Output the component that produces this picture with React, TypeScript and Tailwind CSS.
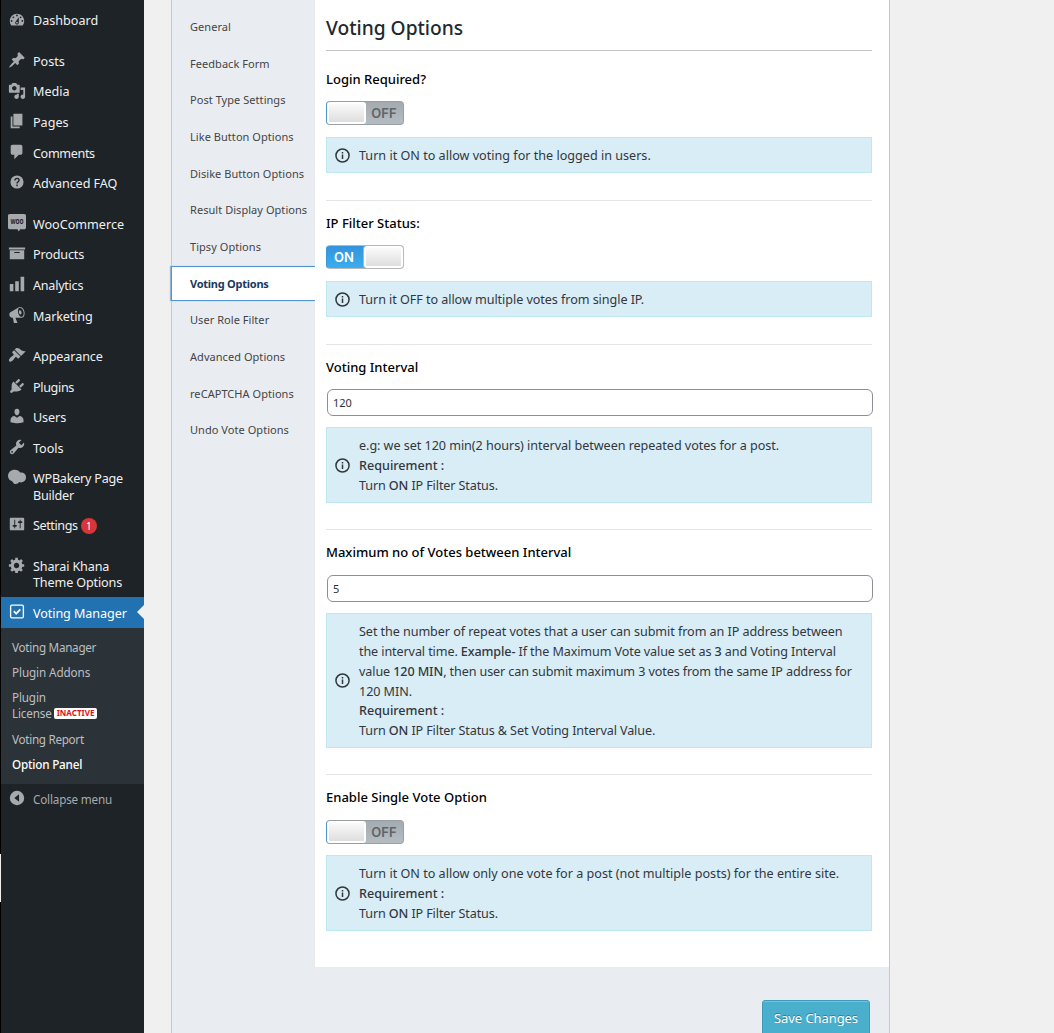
import type { ReactNode } from "react";
import { clsx } from "clsx";

// ---- Icons (20x20 grid) ----

const ICONS: Record<string, ReactNode> = {
  dashboard: (
    <path d="M3.76 16h12.48c1.1-1.37 1.76-3.11 1.76-5 0-4.42-3.58-8-8-8s-8 3.58-8 8c0 1.89.66 3.63 1.76 5zM10 4c.55 0 1 .45 1 1s-.45 1-1 1-1-.45-1-1 .45-1 1-1zM6 6c.55 0 1 .45 1 1s-.45 1-1 1-1-.45-1-1 .45-1 1-1zm8 0c.55 0 1 .45 1 1s-.45 1-1 1-1-.45-1-1 .45-1 1-1zm-5.37 5.55L12 7v6c0 1.1-.9 2-2 2s-2-.9-2-2c0-.57.24-1.08.63-1.45zM4 10c.55 0 1 .45 1 1s-.45 1-1 1-1-.45-1-1 .45-1 1-1zm12 0c.55 0 1 .45 1 1s-.45 1-1 1-1-.45-1-1 .45-1 1-1zm-5 3c0-.55-.45-1-1-1s-1 .45-1 1 .45 1 1 1 1-.45 1-1z" />
  ),
  posts: (
    <path d="M10.44 3.02l1.82-1.82 6.36 6.35-1.83 1.82c-1.05-.68-2.48-.57-3.41.36l-.75.75c-.92.93-1.04 2.35-.35 3.41l-1.83 1.82-2.41-2.41-2.8 2.79c-.42.42-3.38 2.71-3.8 2.29s1.86-3.39 2.28-3.81l2.79-2.79L4.1 9.36l1.83-1.82c1.05.69 2.48.57 3.4-.36l.75-.75c.93-.92 1.05-2.35.36-3.41z" />
  ),
  media: (
    <path d="M13 11V4c0-.55-.45-1-1-1h-1.67L9 1H5L3.67 3H2c-.55 0-1 .45-1 1v7c0 .55.45 1 1 1h10c.55 0 1-.45 1-1zM7 4.5c1.38 0 2.5 1.12 2.5 2.5S8.38 9.5 7 9.5 4.5 8.38 4.5 7 5.62 4.5 7 4.5zM14 6h5v10.5c0 1.38-1.12 2.5-2.5 2.5S14 17.88 14 16.5s1.12-2.5 2.5-2.5c.17 0 .34.02.5.05V9h-3V6zm-4 8.05V13h2v3.5c0 1.38-1.12 2.5-2.5 2.5S7 17.88 7 16.5 8.12 14 9.5 14c.17 0 .34.02.5.05z" />
  ),
  pages: <path d="M6 15V2h10v13H6zm-1 1h8v2H3V5h2v11z" />,
  comments: (
    <path d="M5 2h9c1.1 0 2 .9 2 2v7c0 1.1-.9 2-2 2h-2l-5 5v-5H5c-1.1 0-2-.9-2-2V4c0-1.1.9-2 2-2z" />
  ),
  help: (
    <>
      <circle cx="10" cy="10" r="7.3" />
      <path d="M7.7 8.2c0-1.4 1-2.2 2.3-2.2s2.3.8 2.3 2c0 1.7-2.3 1.8-2.3 3.7M10 12.9v1.7" fill="none" stroke="#1d2327" strokeWidth="1.5" />
    </>
  ),
  woo: (
    <>
      <path d="M2 0h16c1.2 0 2 .8 2 2v13c0 1.2-.8 2-2 2h-4.500L12 19.500 10.500 17H2c-1.2 0-2-.8-2-2V2C0 .8.8 0 2 0z" />
      <text x="10" y="11.500" textAnchor="middle" fontSize="8" fontWeight="800" fill="#1d2327" textLength="14.500" lengthAdjust="spacingAndGlyphs">
        WOO
      </text>
    </>
  ),
  products: <path d="M19 4v2H1V4h18zM2 7h16v10H2V7zm11 3V9H7v1h6z" />,
  analytics: <path d="M18 18V2h-4v16h4zm-6 0V7H8v11h4zm-6 0v-8H2v8h4z" />,
  marketing: (
    <path d="M18.15 5.94c.46 1.62.38 3.22-.02 4.48-.42 1.28-1.26 2.18-2.3 2.48-.16.06-.26.06-.4.06-.06.02-.12.02-.18.02-.06.02-.14.02-.22.02h-6.8l2.22 5.5c.02.14-.06.26-.14.34-.08.1-.24.16-.34.16H6.95c-.1 0-.26-.06-.34-.16-.08-.08-.16-.2-.14-.34l-1-5.5H4.25l-.02-.02c-.5.06-1.08-.18-1.54-.62s-.88-1.08-1.06-1.88c-.24-.8-.2-1.56-.02-2.2.18-.62.58-1.08 1.06-1.3l.02-.02 9-5.4c.1-.06.18-.1.24-.16.06-.04.14-.08.24-.12.16-.08.28-.12.5-.18 1.04-.3 2.24.1 3.22.98s1.84 2.24 2.26 3.86zm-2.58 5.98h-.02c.4-.1.74-.34 1.04-.7.58-.7.86-1.76.86-3.04 0-.64-.1-1.3-.28-1.98-.34-1.36-1.02-2.5-1.78-3.24s-1.68-1.1-2.46-.88c-.82.22-1.4.96-1.7 2-.32 1.04-.28 2.36.06 3.72.38 1.36 1 2.5 1.8 3.24.78.74 1.62 1.1 2.48.88zm-2.54-7.08c.22-.04.42-.02.62.04.38.16.76.48 1.02 1s.42 1.2.42 1.78c0 .3-.04.56-.12.8-.18.48-.44.84-.86.94-.34.1-.8-.06-1.14-.4s-.64-.86-.78-1.5c-.18-.62-.12-1.24.02-1.72s.48-.84.82-.94z" />
  ),
  appearance: (
    <path d="M14.48 11.06L7.41 3.99l1.5-1.5c.5-.56 2.3-.47 3.51.32 1.21.8 1.43 1.28 2.91 2.1 1.18.64 2.45 1.26 4.45.85zm-.71.71L6.7 4.7 4.93 6.47c-.39.39-.39 1.02 0 1.41l1.06 1.06c.39.39.39 1.03 0 1.42-.6.6-1.43 1.11-2.21 1.69-.35.26-.7.53-1.01.84C1.43 14.23.4 16.08 1.4 17.07c.99 1 2.84-.03 4.18-1.36.31-.31.58-.66.85-1.02.57-.78 1.08-1.61 1.69-2.21.39-.39 1.02-.39 1.41 0l1.06 1.06c.39.39 1.02.39 1.41 0z" />
  ),
  plugins: (
    <path d="M13.11 4.36L9.87 7.6 8 5.73l3.24-3.24c.35-.34 1.05-.2 1.56.32.52.51.66 1.21.31 1.55zm-8 1.77l.91-1.12 9.01 9.01-1.19.84c-.71.71-2.63 1.16-3.82 1.16H6.14L4.9 17.26c-.59.59-1.54.59-2.12 0-.59-.58-.59-1.53 0-2.12l1.24-1.24v-3.88c0-1.13.4-3.19 1.09-3.89zm7.26 3.97l3.24-3.24c.34-.35 1.04-.21 1.55.31.52.51.66 1.21.31 1.55l-3.24 3.25z" />
  ),
  users: (
    <path d="M10 9.25c-2.27 0-2.73-3.44-2.73-3.44C7 4.02 7.82 2 9.97 2c2.16 0 2.98 2.02 2.71 3.81 0 0-.41 3.44-2.68 3.44zm0 2.57L12.72 10c2.39 0 4.52 2.33 4.52 4.53v2.49s-3.65 1.13-7.24 1.13c-3.65 0-7.24-1.13-7.24-1.13v-2.49c0-2.25 1.94-4.48 4.47-4.48z" />
  ),
  tools: (
    <path d="M16.68 9.77c-1.34 1.34-3.3 1.67-4.95.99l-5.41 6.52c-.99.99-2.59.99-3.58 0s-.99-2.59 0-3.57l6.52-5.42c-.68-1.65-.35-3.61.99-4.95 1.28-1.28 3.12-1.62 4.72-1.06l-2.89 2.89 2.82 2.82 2.86-2.87c.53 1.58.18 3.39-1.08 4.65zM3.81 16.21c.4.39 1.04.39 1.43 0 .4-.4.4-1.04 0-1.43-.39-.4-1.03-.4-1.43 0-.39.39-.39 1.03 0 1.43z" />
  ),
  bakery: (
    <path d="M7.500 2c3 0 5 1.300 6 3 3.500-.5 6.500 1.800 6.500 5.300s-2.600 5.700-5.500 5.700c-.8 0-1.500-.1-2-.4-1.300 2-4 2.700-6 1.500-.8-.5-1.300-1.200-1.500-2.100C2 14 0 12 0 9c0-4 3.200-7 7.500-7z" />
  ),
  settings: (
    <path d="M18 16V4c0-.55-.45-1-1-1H3c-.55 0-1 .45-1 1v12c0 .55.45 1 1 1h14c.55 0 1-.45 1-1zM8 11h1c.55 0 1 .45 1 1s-.45 1-1 1H8v1.5c0 .28-.22.5-.5.5s-.5-.22-.5-.5V13H6c-.55 0-1-.45-1-1s.45-1 1-1h1V5.5c0-.28.22-.5.5-.5s.5.22.5.5V11zm5-2h-1c-.55 0-1-.45-1-1s.45-1 1-1h1V5.5c0-.28.22-.5.5-.5s.5.22.5.5V7h1c.55 0 1 .45 1 1s-.45 1-1 1h-1v5.5c0 .28-.22.5-.5.5s-.5-.22-.5-.5V9z" />
  ),
  gear: (
    <path d="M18 12h-2.18c-.17.7-.44 1.35-.81 1.93l1.54 1.54-2.1 2.1-1.54-1.54c-.58.36-1.23.63-1.91.79V19H8v-2.18c-.68-.16-1.33-.43-1.91-.79l-1.54 1.54-2.12-2.12 1.54-1.54c-.36-.58-.63-1.23-.79-1.91H1V9.03h2.17c.16-.7.44-1.35.8-1.94L2.43 5.55l2.1-2.1 1.54 1.54c.58-.37 1.24-.64 1.93-.81V2h3v2.18c.68.16 1.33.43 1.91.79l1.54-1.54 2.12 2.12-1.54 1.54c.36.59.64 1.24.8 1.94H18V12zm-8.5 1.5c1.66 0 3-1.34 3-3s-1.34-3-3-3-3 1.34-3 3 1.34 3 3 3z" />
  ),
  voting: (
    <g fill="none" stroke="currentColor" strokeWidth="1.5">
      <rect x="2.9" y="2.4" width="14.2" height="14.2" rx="1.5" />
      <path d="M6.5 9l2.6 2.9L13.7 7" strokeWidth="1.9" />
    </g>
  ),
  collapse: (
    <>
      <circle cx="10" cy="10" r="8" />
      <path d="M12.3 5.8v8.4L7 10z" fill="#1d2327" />
    </>
  ),
};

function Icon({ name }: { name: string }) {
  return (
    <div className="flex w-8 shrink-0 pl-[7px]">
      <svg viewBox="0 0 20 20" fill="currentColor" className="mt-[5.5px] h-[18px] w-[18px] shrink-0 overflow-visible">
        {ICONS[name]}
      </svg>
    </div>
  );
}

// ---- Admin menu ----

interface MenuItem {
  icon: string;
  label: ReactNode;
  tracking?: string;
}

const MENU: MenuItem[][] = [
  [{ icon: "dashboard", label: "Dashboard" }],
  [
    { icon: "posts", label: "Posts" },
    { icon: "media", label: "Media" },
    { icon: "pages", label: "Pages" },
    { icon: "comments", label: "Comments", tracking: "tracking-[-0.35px]" },
    { icon: "help", label: "Advanced FAQ", tracking: "tracking-[-0.08px]" },
  ],
  [
    { icon: "woo", label: "WooCommerce" },
    { icon: "products", label: "Products", tracking: "tracking-[-0.15px]" },
    { icon: "analytics", label: "Analytics", tracking: "tracking-[-0.25px]" },
    { icon: "marketing", label: "Marketing", tracking: "tracking-[-0.15px]" },
  ],
  [
    { icon: "appearance", label: "Appearance", tracking: "tracking-[-0.08px]" },
    { icon: "plugins", label: "Plugins", tracking: "tracking-[-0.35px]" },
    { icon: "users", label: "Users", tracking: "tracking-[-0.1px]" },
    { icon: "tools", label: "Tools" },
    { icon: "bakery", label: <>WPBakery Page<br />Builder</>, tracking: "tracking-[-0.22px]" },
    {
      icon: "settings",
      label: (
        <span className="flex items-center">
          Settings
          <span className="-my-1 ml-[3px] flex h-4 w-4 items-center justify-center rounded-full bg-[#d63638] text-[10px] text-white">
            1
          </span>
        </span>
      ),
      tracking: "tracking-[-0.4px]",
    },
  ],
  [{ icon: "gear", label: <>Sharai Khana<br />Theme Options</>, tracking: "tracking-[-0.13px]" }],
];

function AdminMenu() {
  return (
    <nav className="flex w-36 shrink-0 flex-col border-l border-black bg-[#1d2327] pt-[5px] text-[12.6px] leading-[16.2px] text-[#f0f0f1]">
      <div className="flex flex-col gap-[9.9px]">
        {MENU.map((group, i) => (
          <ul key={i}>
            {group.map(({ icon, label, tracking }) => (
              <li key={icon} className="flex min-h-[30.6px] text-[#a7aaad]">
                <Icon name={icon} />
                <span className={clsx("pt-[8.4px] pb-[6px] whitespace-nowrap text-[#f0f0f1]", tracking)}>{label}</span>
              </li>
            ))}
          </ul>
        ))}
      </div>

      <div className="relative flex h-[30.6px] bg-[#2271b1] text-white">
        <Icon name="voting" />
        <span className="pt-[9px] tracking-[-0.08px] whitespace-nowrap">Voting Manager</span>
        <svg viewBox="0 0 7 14" className="absolute top-2 right-0 h-3.5 w-[7px]">
          <path d="M7 0v14L0 7z" fill="#f0f0f1" />
        </svg>
      </div>

      <ul className="flex h-[156px] flex-col bg-[#2c3338] pt-[7px] pl-[11px] text-[11.7px] leading-4 text-[#bcbfc2]">
        <li className="py-[4.5px] tracking-[-0.28px]">Voting Manager</li>
        <li className="py-[4.5px] tracking-[-0.1px]">Plugin Addons</li>
        <li className="py-[4.5px] tracking-[-0.15px]">
          Plugin
          <br />
          <span className="flex items-center">
            License
            <span className="ml-[2px] flex h-[11px] items-center rounded-xs bg-white px-[3px] text-[8px] font-bold tracking-[0.02px] text-[#e01020]">
              INACTIVE
            </span>
          </span>
        </li>
        <li className="pt-[5.5px] pb-[4.5px] tracking-[-0.3px]">Voting Report</li>
        <li className="py-[4.5px] font-medium tracking-[-0.2px] text-white">Option Panel</li>
      </ul>

      <div className="flex h-[30.6px] text-[11.7px] text-[#a7aaad]">
        <Icon name="collapse" />
        <span className="pt-[7.5px] tracking-[-0.18px] whitespace-nowrap">Collapse menu</span>
      </div>
    </nav>
  );
}

// ---- Settings tabs ----

const TABS = [
  "General",
  "Feedback Form",
  "Post Type Settings",
  "Like Button Options",
  "Disike Button Options",
  "Result Display Options",
  "Tipsy Options",
  "Voting Options",
  "User Role Filter",
  "Advanced Options",
  "reCAPTCHA Options",
  "Undo Vote Options",
];

function Tabs({ active }: { active: string }) {
  return (
    <ul className="w-[143px] shrink-0 pt-[8.8px] text-[11px] tracking-[0.05px] text-[#444]">
      {TABS.map((tab) => (
        <li
          key={tab}
          className={clsx(
            "flex items-center pl-[18px] whitespace-nowrap",
            tab === active
              ? "mt-[0.4px] mb-[1.3px] -ml-px h-[35px] border border-r-0 border-[#4f94d4] bg-white pt-px font-bold tracking-[-0.25px] text-[#1a3a5c] shadow-[-1px_0_1px_#8fb8de]"
              : "h-[36.7px]",
          )}
        >
          {tab}
        </li>
      ))}
    </ul>
  );
}

// ---- Form pieces ----

function Toggle({ checked }: { checked: boolean }) {
  return (
    <button
      role="switch"
      aria-checked={checked}
      className={clsx(
        "flex h-6 w-[78px] items-center rounded border font-['Inter',sans-serif] text-[13px] font-semibold",
        checked
          ? "border-[#b9b9b9] border-l-[#3797dc] bg-linear-to-b from-[#3593db] to-[#3aaeef] text-white"
          : "justify-end border-[#99a0a5] border-l-[#4f94c8] bg-linear-to-b from-[#a3abb0] to-[#b5bdc3] text-[#5f6468]",
      )}
    >
      {checked && <span className="w-[37px] pt-px pr-[3px] text-center">ON</span>}
      <span
        className={clsx(
          "h-[22px] w-[39px] rounded-[3px] border-2 border-white bg-linear-to-b from-[#fafafa] to-[#dedede]",
          checked && "shadow-[-1px_0_0_#a9b7c2]",
        )}
      />
      {!checked && <span className="w-[37px] pt-px pr-px text-center">OFF</span>}
    </button>
  );
}

function TextInput({ value }: { value: string }) {
  return (
    <input
      readOnly
      value={value}
      className="ml-px block h-[27px] w-[546px] rounded-md border border-[#8c8f94] bg-white px-[5px] text-[11px] text-[#2c3338]"
    />
  );
}

function InfoBox({ className, children }: { className: string; children: ReactNode }) {
  return (
    <div
      className={clsx(
        "flex items-center border border-[#bce8f1] bg-[#d9edf7] pl-2 text-[12.6px] leading-[19.7px] text-[#32373c]",
        className,
      )}
    >
      <svg viewBox="0 0 16 16" className="mr-[9px] h-[15px] w-[15px] shrink-0" fill="none" stroke="currentColor" strokeWidth="1.6">
        <circle cx="8" cy="8" r="7" />
        <path d="M8 7v4.7M8 4.2v1.6" />
      </svg>
      <div className="pt-[2px] whitespace-nowrap">{children}</div>
    </div>
  );
}

function Requirement({ children }: { children?: ReactNode }) {
  return (
    <>
      <p className="font-medium">Requirement :</p>
      <p className="tracking-[-0.12px]">
        Turn <strong className="font-medium">ON</strong> IP Filter Status{children}.
      </p>
    </>
  );
}

function Field({ label, className, children }: { label: string; className?: string; children: ReactNode }) {
  return (
    <section className={clsx("border-b border-[#e5e5e5]", className)}>
      <h3 className="h-5 text-[13px] leading-5 font-medium whitespace-nowrap text-black">{label}</h3>
      {children}
    </section>
  );
}

function OptionForm() {
  return (
    <div className="h-[967px] min-w-0 grow bg-white pr-[17px] pl-[11px]">
      <h2 className="h-[51px] border-b border-[#c3c4c7] pt-[14px] text-[19.2px] leading-7 font-medium whitespace-nowrap text-[#23282d]">
        Voting Options
      </h2>

      <Field label="Login Required?" className="h-[150px] pt-[18px]">
        <div className="pt-3">
          <Toggle checked={false} />
        </div>
        <InfoBox className="mt-3 h-9">Turn it ON to allow voting for the logged in users.</InfoBox>
      </Field>

      <Field label="IP Filter Status:" className="h-36 pt-3">
        <div className="pt-3">
          <Toggle checked />
        </div>
        <InfoBox className="mt-3 h-9 tracking-[-0.06px]">Turn it OFF to allow multiple votes from single IP.</InfoBox>
      </Field>

      <Field label="Voting Interval" className="h-[185px] pt-3">
        <div className="pt-3">
          <TextInput value="120" />
        </div>
        <InfoBox className="mt-[11px] h-[76px]">
          <p className="tracking-[-0.05px]">e.g: we set 120 min(2 hours) interval between repeated votes for a post.</p>
          <Requirement />
        </InfoBox>
      </Field>

      <Field label="Maximum no of Votes between Interval" className="h-[245px] pt-3">
        <div className="pt-[13px]">
          <TextInput value="5" />
        </div>
        <InfoBox className="mt-[11px] h-[135px]">
          <p className="tracking-[-0.07px]">
            Set the number of repeat votes that a user can submit from an IP address between
          </p>
          <p className="tracking-[-0.11px]">
            the interval time. <strong className="font-medium">Example-</strong> If the Maximum Vote value set as{" "}
            <strong className="font-medium">3</strong> and Voting Interval
          </p>
          <p className="tracking-[-0.11px]">
            value <strong className="font-medium">120 MIN</strong>, then user can submit maximum 3 votes from the same IP
            address for
          </p>
          <p className="tracking-[-0.07px]">120 MIN.</p>
          <Requirement> &amp; Set Voting Interval Value</Requirement>
        </InfoBox>
      </Field>

      <Field label="Enable Single Vote Option" className="border-b-0 pt-3">
        <div className="pt-[13px]">
          <Toggle checked={false} />
        </div>
        <InfoBox className="mt-[11px] h-[76px]">
          <p>Turn it ON to allow only one vote for a post (not multiple posts) for the entire site.</p>
          <Requirement />
        </InfoBox>
      </Field>
    </div>
  );
}

// ---- Page ----

export default function App() {
  return (
    <div className="relative flex h-[1033px] w-[1054px] overflow-hidden bg-[#f0f0f1] font-['Noto_Sans',sans-serif]">
      <AdminMenu />
      <main className="ml-[27px] flex w-[719px] flex-col border-x border-[#c5c9ce] bg-[#e9edf2]">
        <div className="flex">
          <Tabs active="Voting Options" />
          <OptionForm />
        </div>
        <div className="flex justify-end pt-[33px] pr-[19px]">
          <button className="h-[37px] w-[108px] rounded-[3px] border border-[#3d9ab8] bg-[#4aaecd] text-[13px] tracking-[-0.08px] whitespace-nowrap text-white shadow-[inset_0_1px_0_#75c3da] [text-shadow:0_-1px_0_#2f7f99]">
            Save Changes
          </button>
        </div>
      </main>
      <div className="absolute top-[854px] left-0 h-12 w-px bg-[#f0f0f1]" />
    </div>
  );
}
